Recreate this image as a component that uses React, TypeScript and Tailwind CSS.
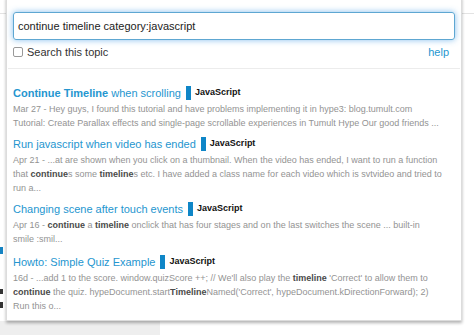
import React from 'react';

type Result = {
  title: React.ReactNode;
  lines: React.ReactNode[];
};

const B = ({ children }: { children: React.ReactNode }) => (
  <b className="font-bold text-[#4a4a4a]">{children}</b>
);

const results: Result[] = [
  {
    title: (
      <>
        <b className="font-bold">Continue Timeline</b> when scrolling
      </>
    ),
    lines: [
      'Mar 27 - Hey guys, I found this tutorial and have problems implementing it in hype3: blog.tumult.com',
      'Tutorial: Create Parallax effects and single-page scrollable experiences in Tumult Hype Our good friends ...',
    ],
  },
  {
    title: 'Run javascript when video has ended',
    lines: [
      'Apr 21 - ...at are shown when you click on a thumbnail. When the video has ended, I want to run a function',
      <>
        that <B>continue</B>s some <B>timeline</B>s etc. I have added a class name for each video which is svtvideo and tried to
      </>,
      'run a...',
    ],
  },
  {
    title: 'Changing scene after touch events',
    lines: [
      <>
        Apr 16 - <B>continue</B> a <B>timeline</B> onclick that has four stages and on the last switches the scene ... built-in
      </>,
      'smile :smil...',
    ],
  },
  {
    title: 'Howto: Simple Quiz Example',
    lines: [
      <>
        16d - ...add 1 to the score. window.quizScore ++; // We'll also play the <B>timeline</B> 'Correct' to allow them to
      </>,
      <>
        <B>continue</B> the quiz. hypeDocument.start<B>Timeline</B>Named('Correct', hypeDocument.kDirectionForward); 2)
      </>,
      'Run this o...',
    ],
  },
];

export default function App() {
  return (
    <div className="relative w-[474px] h-[335px] overflow-hidden bg-white font-['Liberation_Sans',Arial,sans-serif]">
      {/* page behind the dropdown */}
      <div className="h-[14px] border-b border-[#e3e3e3]" />
      <div className="absolute left-0 top-[247px] w-[3px] h-[7px] bg-[#1583c2]" />
      <div className="absolute left-0 top-[289px] w-[3px] h-[5px] bg-[#333]" />
      <div className="absolute left-0 top-[302px] w-[3px] h-[6px] bg-[#333]" />
      <div className="absolute left-0 top-[321px] w-[160px] h-[14px] bg-[#eeeeee]" />

      {/* search dropdown */}
      <div className="absolute left-[6px] top-[-4px] w-[456px] h-[325px] bg-white border border-[#dcdcdc] shadow-[0_2px_3px_rgba(0,0,0,0.3)] px-[6px] pt-[15px]">
        <div className="h-[28px] rounded-[3px] border border-[#5ea7d2] shadow-[0_0_6px_rgba(102,175,233,0.8)] flex items-center px-[4px] text-[11px] text-[#222]">
          continue timeline category:javascript
        </div>

        <div className="flex items-center justify-between h-[22px] mt-[1px] pr-[6px]">
          <label className="flex items-center gap-[4px] text-[11px] text-[#333]">
            <span className="w-[10px] h-[10px] rounded-[2px] border border-[#999] bg-white" />
            Search this topic
          </label>
          <span className="text-[11px] text-[#2596cf]">help</span>
        </div>

        <div className="mt-[5px] border-t border-[#ececec] -mx-[5px]" />

        <div className="pt-[16px] flex flex-col gap-[6px]">
          {results.map((r, i) => (
            <div key={i} className={i === 3 ? 'mt-[2px]' : ''}>
              <div className="flex items-center h-[16px]">
                <span className="text-[11px] text-[#2596cf] whitespace-nowrap">{r.title}</span>
                <span className="ml-[5px] w-[5px] h-[14px] bg-[#0f86c7]" />
                <span className="ml-[4px] text-[9px] font-bold text-[#111]">JavaScript</span>
              </div>
              <div className="mt-[1px] text-[9px] leading-[14px] text-[#939393]">
                {r.lines.map((l, j) => (
                  <div key={j} className="whitespace-nowrap">{l}</div>
                ))}
              </div>
            </div>
          ))}
        </div>
      </div>
    </div>
  );
}
